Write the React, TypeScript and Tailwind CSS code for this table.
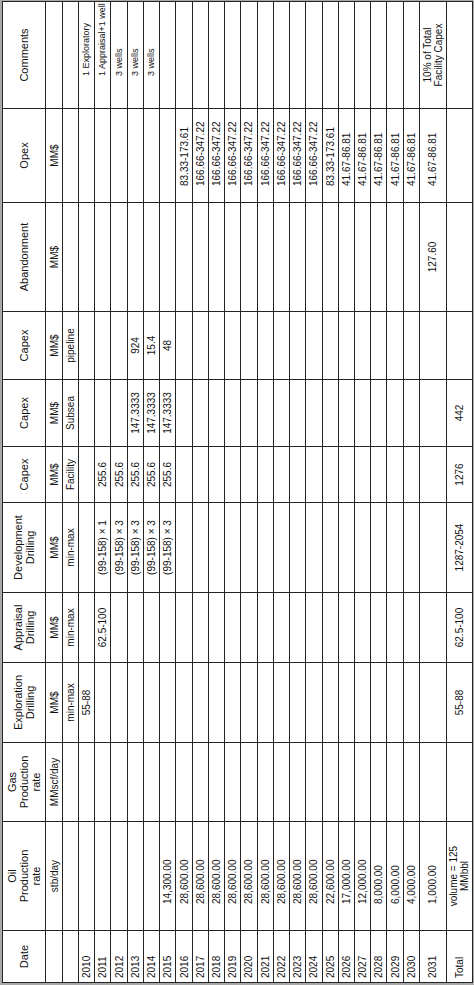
const cols = [
  "w-[52px]",
  "w-[109px]",
  "w-[79px]",
  "w-[80px]",
  "w-[70px]",
  "w-[90px]",
  "w-[56px]",
  "w-[67px]",
  "w-[68px]",
  "w-[109px]",
  "w-[94px]",
  "w-[107px]",
];

type Row = {
  year: string;
  oil?: string;
  expl?: string;
  appr?: string;
  dev?: string;
  fac?: string;
  sub?: string;
  pipe?: string;
  aband?: string;
  opex?: string;
  note?: string;
};

const DEV = "(99-158) × 3";
const PEAK = "28,600.00";
const OPEX_HI = "166.66-347.22";
const OPEX_LO = "41.67-86.81";

const rows: Row[] = [
  { year: "2010", expl: "55-88", note: "1 Exploratory" },
  { year: "2011", appr: "62.5-100", dev: "(99-158) × 1", fac: "255.6", note: "1 Appraisal+1 well" },
  { year: "2012", dev: DEV, fac: "255.6", note: "3 wells" },
  { year: "2013", dev: DEV, fac: "255.6", sub: "147.3333", pipe: "924", note: "3 wells" },
  { year: "2014", dev: DEV, fac: "255.6", sub: "147.3333", pipe: "15.4", note: "3 wells" },
  { year: "2015", oil: "14,300.00", dev: DEV, fac: "255.6", sub: "147.3333", pipe: "48" },
  { year: "2016", oil: PEAK, opex: "83.33-173.61" },
  { year: "2017", oil: PEAK, opex: OPEX_HI },
  { year: "2018", oil: PEAK, opex: OPEX_HI },
  { year: "2019", oil: PEAK, opex: OPEX_HI },
  { year: "2020", oil: PEAK, opex: OPEX_HI },
  { year: "2021", oil: PEAK, opex: OPEX_HI },
  { year: "2022", oil: PEAK, opex: OPEX_HI },
  { year: "2023", oil: PEAK, opex: OPEX_HI },
  { year: "2024", oil: PEAK, opex: OPEX_HI },
  { year: "2025", oil: "22,600.00", opex: "83.33-173.61" },
  { year: "2026", oil: "17,000.00", opex: OPEX_LO },
  { year: "2027", oil: "12,000.00", opex: OPEX_LO },
  { year: "2028", oil: "8,000.00", opex: OPEX_LO },
  { year: "2029", oil: "6,000.00", opex: OPEX_LO },
  { year: "2030", oil: "4,000.00", opex: OPEX_LO },
];

const td = "border border-[#242424] p-0 align-middle";
const head = `${td} text-[11px] leading-[12px]`;

function DataRow({ r }: { r: Row }) {
  return (
    <tr className="h-[16.24px]">
      <td className={`${td} pl-[4px] text-left`}>{r.year}</td>
      <td className={`${td} pl-[26px] text-left`}>{r.oil}</td>
      <td className={td} />
      <td className={`${td} text-center`}>{r.expl}</td>
      <td className={`${td} text-center`}>{r.appr}</td>
      <td className={`${td} text-center`}>{r.dev}</td>
      <td className={`${td} text-center`}>{r.fac}</td>
      <td className={`${td} text-center`}>{r.sub}</td>
      <td className={`${td} text-center`}>{r.pipe}</td>
      <td className={`${td} text-center`}>{r.aband}</td>
      <td className={`${td} pl-[16px] text-left`}>{r.opex}</td>
      <td className={`${td} pl-[32px] text-left text-[9px] whitespace-nowrap`}>{r.note}</td>
    </tr>
  );
}

export default function App() {
  return (
    <div className="h-[985px] w-[474px] overflow-hidden bg-white">
      {/* the page is a photo of a table turned on its side: build it upright, then turn it */}
      <div className="h-[474px] w-[985px] origin-top-left -rotate-90 translate-y-[985px] bg-[#a9a9a9] p-[2px]">
        <table className="h-[470px] w-[981px] table-fixed border-collapse bg-white font-['Liberation_Sans',Arial,sans-serif] text-[10px] leading-[11px] text-[#111]">
          <colgroup>
            {cols.map((c, i) => (
              <col key={i} className={c} />
            ))}
          </colgroup>
          <tbody>
            <tr className="h-[43px] text-center">
              <td className={head}>Date</td>
              <td className={head}>
                Oil
                <br />
                Production
                <br />
                rate
              </td>
              <td className={head}>
                Gas
                <br />
                Production
                <br />
                rate
              </td>
              <td className={head}>
                Exploration
                <br />
                Drilling
              </td>
              <td className={head}>
                Appraisal
                <br />
                Drilling
              </td>
              <td className={head}>
                Development
                <br />
                Drilling
              </td>
              <td className={head}>Capex</td>
              <td className={head}>Capex</td>
              <td className={head}>Capex</td>
              <td className={head}>Abandonment</td>
              <td className={head}>Opex</td>
              <td className={head}>Comments</td>
            </tr>
            <tr className="h-[17px] text-center">
              <td className={td} />
              <td className={td}>stb/day</td>
              <td className={td}>MMscf/day</td>
              <td className={td}>MM$</td>
              <td className={td}>MM$</td>
              <td className={td}>MM$</td>
              <td className={td}>MM$</td>
              <td className={td}>MM$</td>
              <td className={td}>MM$</td>
              <td className={td}>MM$</td>
              <td className={td}>MM$</td>
              <td className={td} />
            </tr>
            <tr className="h-[16px] text-center">
              <td className={td} />
              <td className={td} />
              <td className={td} />
              <td className={td}>min-max</td>
              <td className={td}>min-max</td>
              <td className={td}>min-max</td>
              <td className={td}>Facility</td>
              <td className={td}>Subsea</td>
              <td className={td}>pipeline</td>
              <td className={td} />
              <td className={td} />
              <td className={td} />
            </tr>
            {rows.map((r) => (
              <DataRow key={r.year} r={r} />
            ))}
            <tr className="h-[27px]">
              <td className={`${td} pl-[4px] text-left`}>2031</td>
              <td className={`${td} pl-[26px] text-left`}>1,000.00</td>
              <td className={td} />
              <td className={td} />
              <td className={td} />
              <td className={td} />
              <td className={td} />
              <td className={td} />
              <td className={td} />
              <td className={`${td} text-center`}>127.60</td>
              <td className={`${td} pl-[16px] text-left`}>{OPEX_LO}</td>
              <td className={`${td} text-center`}>
                10% of Total
                <br />
                Facility Capex
              </td>
            </tr>
            <tr className="h-[26px]">
              <td className={`${td} pl-[4px] text-left`}>Total</td>
              <td className={`${td} text-center`}>
                volume = 125
                <br />
                MMbbl
              </td>
              <td className={td} />
              <td className={`${td} text-center`}>55-88</td>
              <td className={`${td} text-center`}>62.5-100</td>
              <td className={`${td} text-center`}>1287-2054</td>
              <td className={`${td} text-center`}>1276</td>
              <td className={`${td} text-center`}>442</td>
              <td className={td} />
              <td className={td} />
              <td className={td} />
              <td className={td} />
            </tr>
          </tbody>
        </table>
      </div>
    </div>
  );
}
